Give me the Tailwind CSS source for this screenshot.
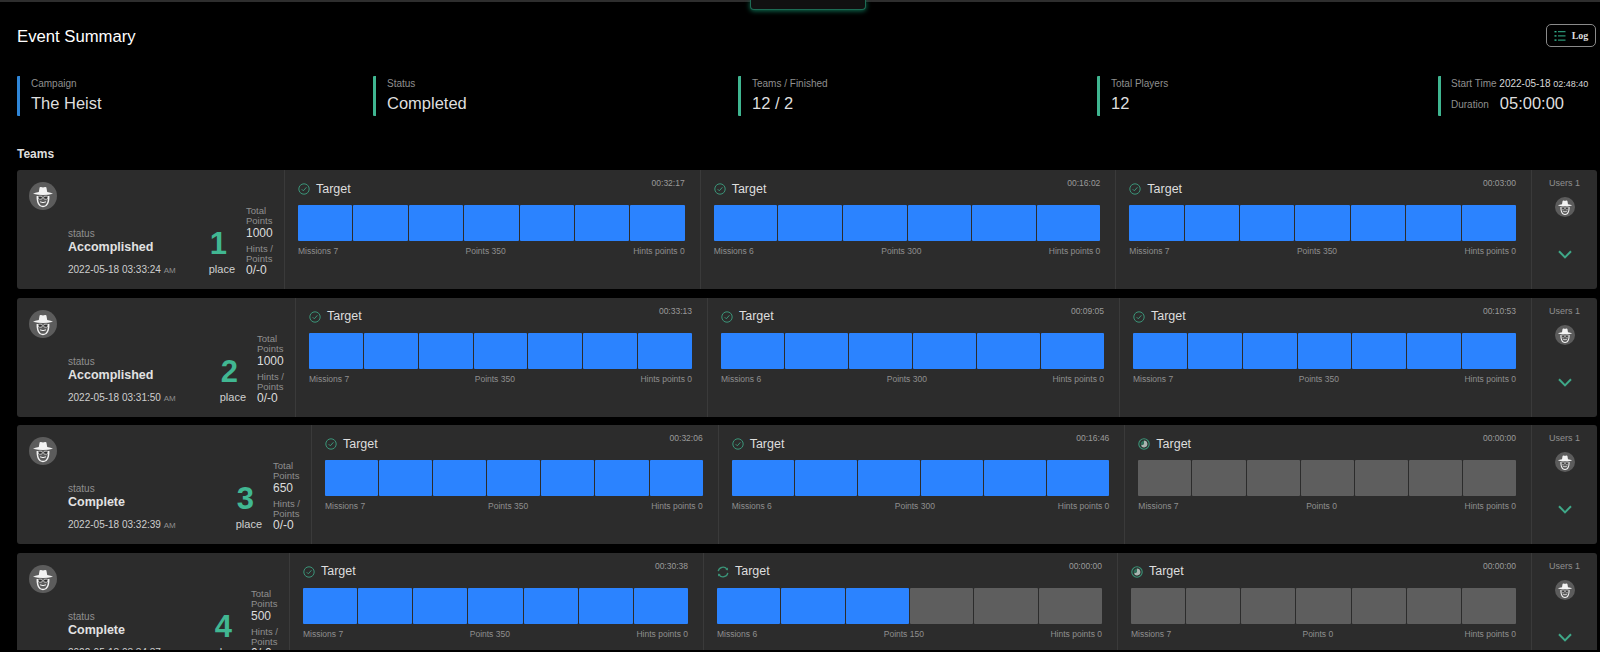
<!DOCTYPE html>
<html>
<head>
<meta charset="utf-8">
<script src="https://cdn.jsdelivr.net/npm/@tailwindcss/browser@4"></script>
<title>Event Summary</title>
</head>
<body class="bg-black font-['Liberation_Sans',Arial,sans-serif] text-[#dedede]">
<svg class="hidden">
<symbol id="avatar" viewBox="0 0 28 28"><circle cx="14" cy="14" r="14" fill="#5c5c5c"/><path d="M9.8 10 L10.6 5.6 Q11 4.6 12 5 Q14 5.8 16 5 Q17 4.6 17.4 5.6 L18.2 10 Q22 10.4 24 11.8 Q14 14.4 4 11.8 Q6 10.4 9.8 10Z" fill="#f2f2f2"/><path d="M8.3 14 Q8 21 11 23.5 Q14 25.5 17 23.5 Q20 21 19.7 14" fill="none" stroke="#f2f2f2" stroke-width="1.5"/><rect x="9.3" y="14.2" width="4" height="3" rx="1.2" fill="#2a2a2a" stroke="#f2f2f2" stroke-width=".7"/><rect x="14.7" y="14.2" width="4" height="3" rx="1.2" fill="#2a2a2a" stroke="#f2f2f2" stroke-width=".7"/><path d="M11 19.8 Q14 21.5 17 19.8" fill="none" stroke="#f2f2f2" stroke-width="1"/></symbol>
<symbol id="check" viewBox="0 0 12 12"><circle cx="6" cy="6" r="5.2" fill="none" stroke="#3b9478" stroke-width="1"/><path d="M3.7 6.2 L5.3 7.8 L8.4 4.3" fill="none" stroke="#3b9478" stroke-width="1"/></symbol>
<symbol id="half" viewBox="0 0 12 12"><circle cx="6" cy="6" r="5.2" fill="none" stroke="#3b9478" stroke-width="1.1"/><path d="M6 2.6 A3.4 3.4 0 1 1 2.9 7.4 L6 6Z" fill="#a9b5b0"/><path d="M6 2.6 A3.4 3.4 0 0 0 2.9 7.4 L6 6Z" fill="#2f6f5a"/></symbol>
<symbol id="sync" viewBox="0 0 12 12"><path d="M1.2 5.2 A4.9 4.9 0 0 1 10 3.2" fill="none" stroke="#3b9478" stroke-width="1.3"/><path d="M8.4 4 L11 4.2 L10.8 1.5Z" fill="#3b9478"/><path d="M10.8 6.8 A4.9 4.9 0 0 1 2 8.8" fill="none" stroke="#3b9478" stroke-width="1.3"/><path d="M3.6 8 L1 7.8 L1.2 10.5Z" fill="#3b9478"/></symbol>
<symbol id="chev" viewBox="0 0 14 9"><path d="M1 1.2 L7 7.4 L13 1.2" fill="none" stroke="#3fa888" stroke-width="2"/></symbol>
<symbol id="list" viewBox="0 0 12 12"><g fill="#35b58f"><rect x="0.5" y="1" width="2" height="1.4"/><rect x="0.5" y="5.2" width="2" height="1.4"/><rect x="0.5" y="9.4" width="2" height="1.4"/><rect x="4" y="1.2" width="7.5" height="1"/><rect x="4" y="5.4" width="7.5" height="1"/><rect x="4" y="9.6" width="7.5" height="1"/></g></symbol>
</svg>

<div class="relative h-[650px] overflow-hidden">
  <div class="h-[2px] bg-[#2e2e2e]"></div>
  <div class="absolute left-[750px] top-0 h-[10px] w-[116px] rounded-b-[4px] border-x border-b border-[#1d6b54] bg-[#111] shadow-[0_1px_5px_#0f6f53]"></div>

  <div class="pl-[17px] pr-[3px]">
    <div class="mt-[22px] flex h-[23px] items-center justify-between pr-px">
      <h1 class="pt-[2px] text-[16.7px] leading-[22px] text-white">Event Summary</h1>
      <button class="flex h-[23px] w-[50px] items-center justify-center gap-[6px] rounded-[5px] border border-[#8a8a8a] bg-black">
        <svg class="h-[12px] w-[12px]"><use href="#list"/></svg>
        <span class="font-['Liberation_Serif',serif] text-[10px] font-bold text-[#dcdcdc]">Log</span>
      </button>
    </div>

    <div class="mt-[29px] flex h-[40px]">
      <div class="w-[356px] rounded-[1px] border-l-[3px] border-[#2f86d8] pl-[11px] pt-[2px]"><div class="text-[10px] leading-[12px] text-[#8f8f8f]">Campaign</div><div class="mt-[3px] text-[16.5px] leading-[20px]">The Heist</div></div>
      <div class="w-[365px] rounded-[1px] border-l-[3px] border-[#3fb590] pl-[11px] pt-[2px]"><div class="text-[10px] leading-[12px] text-[#8f8f8f]">Status</div><div class="mt-[3px] text-[16.5px] leading-[20px]">Completed</div></div>
      <div class="w-[359px] rounded-[1px] border-l-[3px] border-[#3fb590] pl-[11px] pt-[2px]"><div class="text-[10px] leading-[12px] text-[#8f8f8f]">Teams / Finished</div><div class="mt-[3px] text-[16.5px] leading-[20px]">12 / 2</div></div>
      <div class="w-[341px] rounded-[1px] border-l-[3px] border-[#3fb590] pl-[11px] pt-[2px]"><div class="text-[10px] leading-[12px] text-[#8f8f8f]">Total Players</div><div class="mt-[3px] text-[16.5px] leading-[20px]">12</div></div>
      <div class="flex-1 rounded-[1px] border-l-[3px] border-[#3fb590] pl-[10px] pt-[2px]">
        <div class="whitespace-nowrap text-[10px] leading-[12px] text-[#8f8f8f]">Start Time <span class="text-[#d8d8d8]">2022-05-18 <span class="text-[9px]">02:48:40</span></span></div>
        <div class="mt-[3px] flex items-center gap-[11px]"><span class="pt-[2px] text-[10px] text-[#8f8f8f]">Duration</span><span class="text-[16.5px] leading-[20px]">05:00:00</span></div>
      </div>
    </div>

    <h2 class="mt-[30px] mb-[8px] text-[12px] font-bold leading-[16px] text-[#dedede]">Teams</h2>

    <div class="flex flex-col gap-[8.5px]">

      <!-- Team 1 -->
      <div class="flex h-[119px] rounded-[3px] bg-[#2c2c2c]">
        <div class="flex w-[267px] shrink-0 pl-[12px] pr-[8px]">
          <svg class="mt-[12px] h-[28px] w-[28px] shrink-0"><use href="#avatar"/></svg>
          <div class="ml-[11px] self-end whitespace-nowrap pb-[12px]"><div class="text-[10px] leading-[12px] text-[#8f8f8f]">status</div><div class="text-[12.5px] font-bold leading-[14px] text-[#e2e2e2]">Accomplished</div><div class="mt-[10px] text-[10px] leading-[12px] text-[#cfcfcf]">2022-05-18 03:33:24 <span class="text-[8px] text-[#8f8f8f]">AM</span></div></div>
          <div class="ml-auto flex flex-col items-start self-end pb-[13px]"><div class="pl-px text-[31px] font-bold leading-[26px] text-[#41b792]">1</div><div class="mt-[5px] text-[11px] leading-[14px] text-[#d0d0d0]">place</div></div>
          <div class="ml-[11px] w-[30px] shrink-0 self-end pb-[13px] text-[9.5px] leading-[10px] text-[#8f8f8f]"><div>Total Points</div><div class="text-[12px] leading-[14px] text-[#dcdcdc]">1000</div><div class="mt-[4px]">Hints / Points</div><div class="text-[12px] leading-[12px] text-[#dcdcdc]">0/-0</div></div>
        </div>
        <div class="min-w-0 flex-1 border-l border-[#3a3a3a] pl-[13px] pr-[15px] pt-[8px]">
          <div class="flex h-[27px] justify-between"><div class="flex h-[22px] items-center gap-[6px]"><svg class="h-[12px] w-[12px]"><use href="#check"/></svg><span class="text-[12.5px]">Target</span></div><div class="text-[8.5px] leading-[10px] text-[#9a9a9a]">00:32:17</div></div>
          <div class="flex h-[36px] gap-px"><div class="flex-1 rounded-[1px] bg-[#2b83ff]"></div><div class="flex-1 rounded-[1px] bg-[#2b83ff]"></div><div class="flex-1 rounded-[1px] bg-[#2b83ff]"></div><div class="flex-1 rounded-[1px] bg-[#2b83ff]"></div><div class="flex-1 rounded-[1px] bg-[#2b83ff]"></div><div class="flex-1 rounded-[1px] bg-[#2b83ff]"></div><div class="flex-1 rounded-[1px] bg-[#2b83ff]"></div></div>
          <div class="mt-[4px] flex justify-between text-[8.5px] leading-[12px] text-[#8f8f8f]"><span>Missions 7</span><span>Points 350</span><span>Hints points 0</span></div>
        </div>
        <div class="min-w-0 flex-1 border-l border-[#3a3a3a] pl-[13px] pr-[15px] pt-[8px]">
          <div class="flex h-[27px] justify-between"><div class="flex h-[22px] items-center gap-[6px]"><svg class="h-[12px] w-[12px]"><use href="#check"/></svg><span class="text-[12.5px]">Target</span></div><div class="text-[8.5px] leading-[10px] text-[#9a9a9a]">00:16:02</div></div>
          <div class="flex h-[36px] gap-px"><div class="flex-1 rounded-[1px] bg-[#2b83ff]"></div><div class="flex-1 rounded-[1px] bg-[#2b83ff]"></div><div class="flex-1 rounded-[1px] bg-[#2b83ff]"></div><div class="flex-1 rounded-[1px] bg-[#2b83ff]"></div><div class="flex-1 rounded-[1px] bg-[#2b83ff]"></div><div class="flex-1 rounded-[1px] bg-[#2b83ff]"></div></div>
          <div class="mt-[4px] flex justify-between text-[8.5px] leading-[12px] text-[#8f8f8f]"><span>Missions 6</span><span>Points 300</span><span>Hints points 0</span></div>
        </div>
        <div class="min-w-0 flex-1 border-l border-[#3a3a3a] pl-[13px] pr-[15px] pt-[8px]">
          <div class="flex h-[27px] justify-between"><div class="flex h-[22px] items-center gap-[6px]"><svg class="h-[12px] w-[12px]"><use href="#check"/></svg><span class="text-[12.5px]">Target</span></div><div class="text-[8.5px] leading-[10px] text-[#9a9a9a]">00:03:00</div></div>
          <div class="flex h-[36px] gap-px"><div class="flex-1 rounded-[1px] bg-[#2b83ff]"></div><div class="flex-1 rounded-[1px] bg-[#2b83ff]"></div><div class="flex-1 rounded-[1px] bg-[#2b83ff]"></div><div class="flex-1 rounded-[1px] bg-[#2b83ff]"></div><div class="flex-1 rounded-[1px] bg-[#2b83ff]"></div><div class="flex-1 rounded-[1px] bg-[#2b83ff]"></div><div class="flex-1 rounded-[1px] bg-[#2b83ff]"></div></div>
          <div class="mt-[4px] flex justify-between text-[8.5px] leading-[12px] text-[#8f8f8f]"><span>Missions 7</span><span>Points 350</span><span>Hints points 0</span></div>
        </div>
        <div class="flex w-[66px] shrink-0 flex-col items-center border-l border-[#3a3a3a] pt-[8px]"><div class="text-[9px] leading-[10px] text-[#8f8f8f]">Users 1</div><svg class="mt-[9px] h-[20px] w-[20px]"><use href="#avatar"/></svg><svg class="mt-[33px] h-[9px] w-[14px]"><use href="#chev"/></svg></div>
      </div>

      <!-- Team 2 -->
      <div class="flex h-[119px] rounded-[3px] bg-[#2c2c2c]">
        <div class="flex w-[278px] shrink-0 pl-[12px] pr-[8px]">
          <svg class="mt-[12px] h-[28px] w-[28px] shrink-0"><use href="#avatar"/></svg>
          <div class="ml-[11px] self-end whitespace-nowrap pb-[12px]"><div class="text-[10px] leading-[12px] text-[#8f8f8f]">status</div><div class="text-[12.5px] font-bold leading-[14px] text-[#e2e2e2]">Accomplished</div><div class="mt-[10px] text-[10px] leading-[12px] text-[#cfcfcf]">2022-05-18 03:31:50 <span class="text-[8px] text-[#8f8f8f]">AM</span></div></div>
          <div class="ml-auto flex flex-col items-start self-end pb-[13px]"><div class="pl-px text-[31px] font-bold leading-[26px] text-[#41b792]">2</div><div class="mt-[5px] text-[11px] leading-[14px] text-[#d0d0d0]">place</div></div>
          <div class="ml-[11px] w-[30px] shrink-0 self-end pb-[13px] text-[9.5px] leading-[10px] text-[#8f8f8f]"><div>Total Points</div><div class="text-[12px] leading-[14px] text-[#dcdcdc]">1000</div><div class="mt-[4px]">Hints / Points</div><div class="text-[12px] leading-[12px] text-[#dcdcdc]">0/-0</div></div>
        </div>
        <div class="min-w-0 flex-1 border-l border-[#3a3a3a] pl-[13px] pr-[15px] pt-[8px]">
          <div class="flex h-[27px] justify-between"><div class="flex h-[22px] items-center gap-[6px]"><svg class="h-[12px] w-[12px]"><use href="#check"/></svg><span class="text-[12.5px]">Target</span></div><div class="text-[8.5px] leading-[10px] text-[#9a9a9a]">00:33:13</div></div>
          <div class="flex h-[36px] gap-px"><div class="flex-1 rounded-[1px] bg-[#2b83ff]"></div><div class="flex-1 rounded-[1px] bg-[#2b83ff]"></div><div class="flex-1 rounded-[1px] bg-[#2b83ff]"></div><div class="flex-1 rounded-[1px] bg-[#2b83ff]"></div><div class="flex-1 rounded-[1px] bg-[#2b83ff]"></div><div class="flex-1 rounded-[1px] bg-[#2b83ff]"></div><div class="flex-1 rounded-[1px] bg-[#2b83ff]"></div></div>
          <div class="mt-[4px] flex justify-between text-[8.5px] leading-[12px] text-[#8f8f8f]"><span>Missions 7</span><span>Points 350</span><span>Hints points 0</span></div>
        </div>
        <div class="min-w-0 flex-1 border-l border-[#3a3a3a] pl-[13px] pr-[15px] pt-[8px]">
          <div class="flex h-[27px] justify-between"><div class="flex h-[22px] items-center gap-[6px]"><svg class="h-[12px] w-[12px]"><use href="#check"/></svg><span class="text-[12.5px]">Target</span></div><div class="text-[8.5px] leading-[10px] text-[#9a9a9a]">00:09:05</div></div>
          <div class="flex h-[36px] gap-px"><div class="flex-1 rounded-[1px] bg-[#2b83ff]"></div><div class="flex-1 rounded-[1px] bg-[#2b83ff]"></div><div class="flex-1 rounded-[1px] bg-[#2b83ff]"></div><div class="flex-1 rounded-[1px] bg-[#2b83ff]"></div><div class="flex-1 rounded-[1px] bg-[#2b83ff]"></div><div class="flex-1 rounded-[1px] bg-[#2b83ff]"></div></div>
          <div class="mt-[4px] flex justify-between text-[8.5px] leading-[12px] text-[#8f8f8f]"><span>Missions 6</span><span>Points 300</span><span>Hints points 0</span></div>
        </div>
        <div class="min-w-0 flex-1 border-l border-[#3a3a3a] pl-[13px] pr-[15px] pt-[8px]">
          <div class="flex h-[27px] justify-between"><div class="flex h-[22px] items-center gap-[6px]"><svg class="h-[12px] w-[12px]"><use href="#check"/></svg><span class="text-[12.5px]">Target</span></div><div class="text-[8.5px] leading-[10px] text-[#9a9a9a]">00:10:53</div></div>
          <div class="flex h-[36px] gap-px"><div class="flex-1 rounded-[1px] bg-[#2b83ff]"></div><div class="flex-1 rounded-[1px] bg-[#2b83ff]"></div><div class="flex-1 rounded-[1px] bg-[#2b83ff]"></div><div class="flex-1 rounded-[1px] bg-[#2b83ff]"></div><div class="flex-1 rounded-[1px] bg-[#2b83ff]"></div><div class="flex-1 rounded-[1px] bg-[#2b83ff]"></div><div class="flex-1 rounded-[1px] bg-[#2b83ff]"></div></div>
          <div class="mt-[4px] flex justify-between text-[8.5px] leading-[12px] text-[#8f8f8f]"><span>Missions 7</span><span>Points 350</span><span>Hints points 0</span></div>
        </div>
        <div class="flex w-[66px] shrink-0 flex-col items-center border-l border-[#3a3a3a] pt-[8px]"><div class="text-[9px] leading-[10px] text-[#8f8f8f]">Users 1</div><svg class="mt-[9px] h-[20px] w-[20px]"><use href="#avatar"/></svg><svg class="mt-[33px] h-[9px] w-[14px]"><use href="#chev"/></svg></div>
      </div>

      <!-- Team 3 -->
      <div class="flex h-[119px] rounded-[3px] bg-[#2c2c2c]">
        <div class="flex w-[294px] shrink-0 pl-[12px] pr-[8px]">
          <svg class="mt-[12px] h-[28px] w-[28px] shrink-0"><use href="#avatar"/></svg>
          <div class="ml-[11px] self-end whitespace-nowrap pb-[12px]"><div class="text-[10px] leading-[12px] text-[#8f8f8f]">status</div><div class="text-[12.5px] font-bold leading-[14px] text-[#e2e2e2]">Complete</div><div class="mt-[10px] text-[10px] leading-[12px] text-[#cfcfcf]">2022-05-18 03:32:39 <span class="text-[8px] text-[#8f8f8f]">AM</span></div></div>
          <div class="ml-auto flex flex-col items-start self-end pb-[13px]"><div class="pl-px text-[31px] font-bold leading-[26px] text-[#41b792]">3</div><div class="mt-[5px] text-[11px] leading-[14px] text-[#d0d0d0]">place</div></div>
          <div class="ml-[11px] w-[30px] shrink-0 self-end pb-[13px] text-[9.5px] leading-[10px] text-[#8f8f8f]"><div>Total Points</div><div class="text-[12px] leading-[14px] text-[#dcdcdc]">650</div><div class="mt-[4px]">Hints / Points</div><div class="text-[12px] leading-[12px] text-[#dcdcdc]">0/-0</div></div>
        </div>
        <div class="min-w-0 flex-1 border-l border-[#3a3a3a] pl-[13px] pr-[15px] pt-[8px]">
          <div class="flex h-[27px] justify-between"><div class="flex h-[22px] items-center gap-[6px]"><svg class="h-[12px] w-[12px]"><use href="#check"/></svg><span class="text-[12.5px]">Target</span></div><div class="text-[8.5px] leading-[10px] text-[#9a9a9a]">00:32:06</div></div>
          <div class="flex h-[36px] gap-px"><div class="flex-1 rounded-[1px] bg-[#2b83ff]"></div><div class="flex-1 rounded-[1px] bg-[#2b83ff]"></div><div class="flex-1 rounded-[1px] bg-[#2b83ff]"></div><div class="flex-1 rounded-[1px] bg-[#2b83ff]"></div><div class="flex-1 rounded-[1px] bg-[#2b83ff]"></div><div class="flex-1 rounded-[1px] bg-[#2b83ff]"></div><div class="flex-1 rounded-[1px] bg-[#2b83ff]"></div></div>
          <div class="mt-[4px] flex justify-between text-[8.5px] leading-[12px] text-[#8f8f8f]"><span>Missions 7</span><span>Points 350</span><span>Hints points 0</span></div>
        </div>
        <div class="min-w-0 flex-1 border-l border-[#3a3a3a] pl-[13px] pr-[15px] pt-[8px]">
          <div class="flex h-[27px] justify-between"><div class="flex h-[22px] items-center gap-[6px]"><svg class="h-[12px] w-[12px]"><use href="#check"/></svg><span class="text-[12.5px]">Target</span></div><div class="text-[8.5px] leading-[10px] text-[#9a9a9a]">00:16:46</div></div>
          <div class="flex h-[36px] gap-px"><div class="flex-1 rounded-[1px] bg-[#2b83ff]"></div><div class="flex-1 rounded-[1px] bg-[#2b83ff]"></div><div class="flex-1 rounded-[1px] bg-[#2b83ff]"></div><div class="flex-1 rounded-[1px] bg-[#2b83ff]"></div><div class="flex-1 rounded-[1px] bg-[#2b83ff]"></div><div class="flex-1 rounded-[1px] bg-[#2b83ff]"></div></div>
          <div class="mt-[4px] flex justify-between text-[8.5px] leading-[12px] text-[#8f8f8f]"><span>Missions 6</span><span>Points 300</span><span>Hints points 0</span></div>
        </div>
        <div class="min-w-0 flex-1 border-l border-[#3a3a3a] pl-[13px] pr-[15px] pt-[8px]">
          <div class="flex h-[27px] justify-between"><div class="flex h-[22px] items-center gap-[6px]"><svg class="h-[12px] w-[12px]"><use href="#half"/></svg><span class="text-[12.5px]">Target</span></div><div class="text-[8.5px] leading-[10px] text-[#9a9a9a]">00:00:00</div></div>
          <div class="flex h-[36px] gap-px"><div class="flex-1 rounded-[1px] bg-[#5e5e5e]"></div><div class="flex-1 rounded-[1px] bg-[#5e5e5e]"></div><div class="flex-1 rounded-[1px] bg-[#5e5e5e]"></div><div class="flex-1 rounded-[1px] bg-[#5e5e5e]"></div><div class="flex-1 rounded-[1px] bg-[#5e5e5e]"></div><div class="flex-1 rounded-[1px] bg-[#5e5e5e]"></div><div class="flex-1 rounded-[1px] bg-[#5e5e5e]"></div></div>
          <div class="mt-[4px] flex justify-between text-[8.5px] leading-[12px] text-[#8f8f8f]"><span>Missions 7</span><span>Points 0</span><span>Hints points 0</span></div>
        </div>
        <div class="flex w-[66px] shrink-0 flex-col items-center border-l border-[#3a3a3a] pt-[8px]"><div class="text-[9px] leading-[10px] text-[#8f8f8f]">Users 1</div><svg class="mt-[9px] h-[20px] w-[20px]"><use href="#avatar"/></svg><svg class="mt-[33px] h-[9px] w-[14px]"><use href="#chev"/></svg></div>
      </div>

      <!-- Team 4 -->
      <div class="flex h-[119px] rounded-[3px] bg-[#2c2c2c]">
        <div class="flex w-[272px] shrink-0 pl-[12px] pr-[8px]">
          <svg class="mt-[12px] h-[28px] w-[28px] shrink-0"><use href="#avatar"/></svg>
          <div class="ml-[11px] self-end whitespace-nowrap pb-[12px]"><div class="text-[10px] leading-[12px] text-[#8f8f8f]">status</div><div class="text-[12.5px] font-bold leading-[14px] text-[#e2e2e2]">Complete</div><div class="mt-[10px] text-[10px] leading-[12px] text-[#cfcfcf]">2022-05-18 03:34:37 <span class="text-[8px] text-[#8f8f8f]">AM</span></div></div>
          <div class="ml-auto flex flex-col items-start self-end pb-[13px]"><div class="pl-px text-[31px] font-bold leading-[26px] text-[#41b792]">4</div><div class="mt-[5px] text-[11px] leading-[14px] text-[#d0d0d0]">place</div></div>
          <div class="ml-[11px] w-[30px] shrink-0 self-end pb-[13px] text-[9.5px] leading-[10px] text-[#8f8f8f]"><div>Total Points</div><div class="text-[12px] leading-[14px] text-[#dcdcdc]">500</div><div class="mt-[4px]">Hints / Points</div><div class="text-[12px] leading-[12px] text-[#dcdcdc]">0/-0</div></div>
        </div>
        <div class="min-w-0 flex-1 border-l border-[#3a3a3a] pl-[13px] pr-[15px] pt-[8px]">
          <div class="flex h-[27px] justify-between"><div class="flex h-[22px] items-center gap-[6px]"><svg class="h-[12px] w-[12px]"><use href="#check"/></svg><span class="text-[12.5px]">Target</span></div><div class="text-[8.5px] leading-[10px] text-[#9a9a9a]">00:30:38</div></div>
          <div class="flex h-[36px] gap-px"><div class="flex-1 rounded-[1px] bg-[#2b83ff]"></div><div class="flex-1 rounded-[1px] bg-[#2b83ff]"></div><div class="flex-1 rounded-[1px] bg-[#2b83ff]"></div><div class="flex-1 rounded-[1px] bg-[#2b83ff]"></div><div class="flex-1 rounded-[1px] bg-[#2b83ff]"></div><div class="flex-1 rounded-[1px] bg-[#2b83ff]"></div><div class="flex-1 rounded-[1px] bg-[#2b83ff]"></div></div>
          <div class="mt-[4px] flex justify-between text-[8.5px] leading-[12px] text-[#8f8f8f]"><span>Missions 7</span><span>Points 350</span><span>Hints points 0</span></div>
        </div>
        <div class="min-w-0 flex-1 border-l border-[#3a3a3a] pl-[13px] pr-[15px] pt-[8px]">
          <div class="flex h-[27px] justify-between"><div class="flex h-[22px] items-center gap-[6px]"><svg class="h-[12px] w-[12px]"><use href="#sync"/></svg><span class="text-[12.5px]">Target</span></div><div class="text-[8.5px] leading-[10px] text-[#9a9a9a]">00:00:00</div></div>
          <div class="flex h-[36px] gap-px"><div class="flex-1 rounded-[1px] bg-[#2b83ff]"></div><div class="flex-1 rounded-[1px] bg-[#2b83ff]"></div><div class="flex-1 rounded-[1px] bg-[#2b83ff]"></div><div class="flex-1 rounded-[1px] bg-[#5e5e5e]"></div><div class="flex-1 rounded-[1px] bg-[#5e5e5e]"></div><div class="flex-1 rounded-[1px] bg-[#5e5e5e]"></div></div>
          <div class="mt-[4px] flex justify-between text-[8.5px] leading-[12px] text-[#8f8f8f]"><span>Missions 6</span><span>Points 150</span><span>Hints points 0</span></div>
        </div>
        <div class="min-w-0 flex-1 border-l border-[#3a3a3a] pl-[13px] pr-[15px] pt-[8px]">
          <div class="flex h-[27px] justify-between"><div class="flex h-[22px] items-center gap-[6px]"><svg class="h-[12px] w-[12px]"><use href="#half"/></svg><span class="text-[12.5px]">Target</span></div><div class="text-[8.5px] leading-[10px] text-[#9a9a9a]">00:00:00</div></div>
          <div class="flex h-[36px] gap-px"><div class="flex-1 rounded-[1px] bg-[#5e5e5e]"></div><div class="flex-1 rounded-[1px] bg-[#5e5e5e]"></div><div class="flex-1 rounded-[1px] bg-[#5e5e5e]"></div><div class="flex-1 rounded-[1px] bg-[#5e5e5e]"></div><div class="flex-1 rounded-[1px] bg-[#5e5e5e]"></div><div class="flex-1 rounded-[1px] bg-[#5e5e5e]"></div><div class="flex-1 rounded-[1px] bg-[#5e5e5e]"></div></div>
          <div class="mt-[4px] flex justify-between text-[8.5px] leading-[12px] text-[#8f8f8f]"><span>Missions 7</span><span>Points 0</span><span>Hints points 0</span></div>
        </div>
        <div class="flex w-[66px] shrink-0 flex-col items-center border-l border-[#3a3a3a] pt-[8px]"><div class="text-[9px] leading-[10px] text-[#8f8f8f]">Users 1</div><svg class="mt-[9px] h-[20px] w-[20px]"><use href="#avatar"/></svg><svg class="mt-[33px] h-[9px] w-[14px]"><use href="#chev"/></svg></div>
      </div>

    </div>
  </div>
</div>
</body>
</html>
